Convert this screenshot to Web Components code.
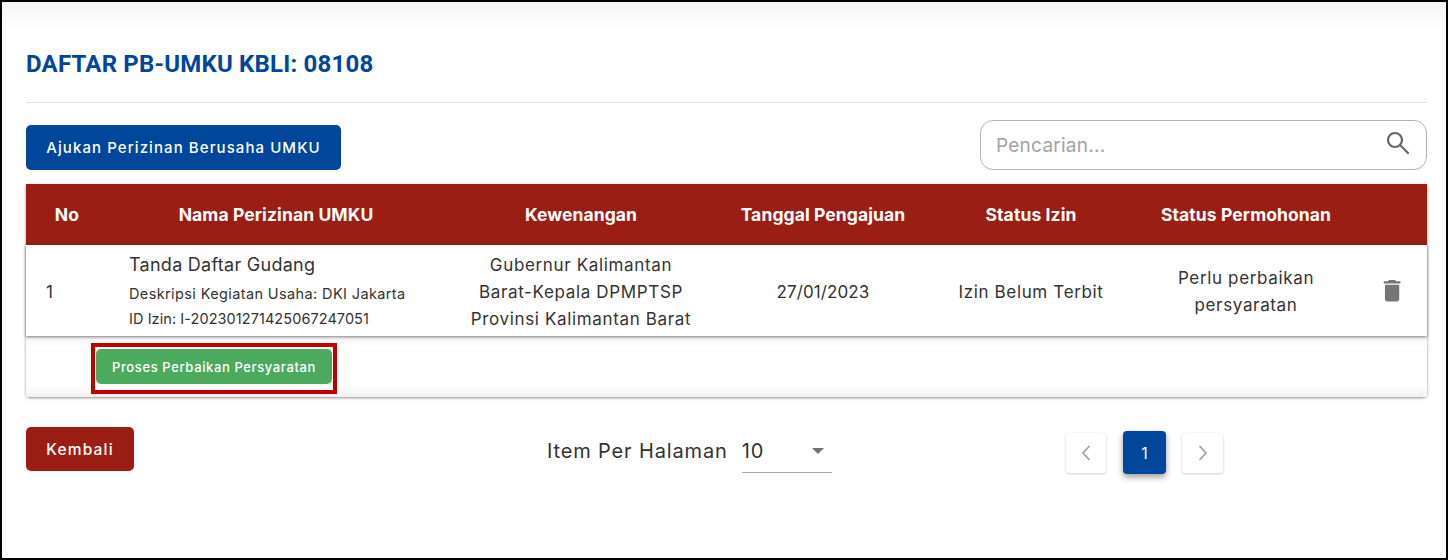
<!DOCTYPE html>
<html lang="id">
<head>
<meta charset="utf-8">
<title>Daftar PB-UMKU</title>
<style>
  html, body { margin: 0; background: #fff; }
  body { font-family: Inter, "Noto Sans", sans-serif; color: #333; }
</style>
</head>
<body>
<umku-page>
  <umku-toolbar slot="toolbar"></umku-toolbar>
  <umku-table slot="table"></umku-table>
  <umku-footer slot="footer"></umku-footer>
</umku-page>

<script>
class UmkuButton extends HTMLElement {
    constructor() {
        super();
        this.attachShadow({ mode: 'open' });
        this.shadowRoot.innerHTML = `
        <style>
          :host { display: inline-flex; }
          button {
            font: 500 var(--fs, 14px) Inter, sans-serif;
            letter-spacing: var(--ls, .6px);
            color: #fff;
            background: var(--bg, #00479b);
            border: 0;
            border-radius: 5px;
            width: var(--w, auto);
            height: var(--h, 45px);
            padding: 0;
            white-space: nowrap;
          }
        </style>
        <button><slot></slot></button>`;
    }
}

class UmkuSearch extends HTMLElement {
    constructor() {
        super();
        this.attachShadow({ mode: 'open' });
        this.shadowRoot.innerHTML = `
        <style>
          :host {
            display: flex;
            align-items: center;
            justify-content: space-between;
            box-sizing: border-box;
            width: 447px;
            height: 50px;
            border: 1px solid #b4b4b4;
            border-radius: 13px;
            padding: 0 16px 0 15px;
            font: 400 19px Inter, sans-serif;
            letter-spacing: .25px;
            color: #a3a3a3;
          }
          svg { display: block; margin-top: -6px; }
        </style>
        <span>Pencarian...</span>
        <svg width="25" height="25" viewBox="0 0 25 25" fill="none" stroke="#666" stroke-width="2.2">
          <circle cx="10" cy="10" r="7"/>
          <path d="M15 15l8 8" stroke-linecap="round"/>
        </svg>`;
    }
}

class UmkuToolbar extends HTMLElement {
    constructor() {
        super();
        this.attachShadow({ mode: 'open' });
        this.shadowRoot.innerHTML = `
        <style>
          :host { display: flex; justify-content: space-between; align-items: flex-end; height: 50px; }
        </style>
        <umku-button style="--w:315px;--fs:15px;--ls:1.08px">Ajukan Perizinan Berusaha UMKU</umku-button>
        <umku-search></umku-search>`;
    }
}

class UmkuTable extends HTMLElement {
    set data(row) {
        this._row = row;
        this.render();
    }

    constructor() {
        super();
        this.attachShadow({ mode: 'open' });
    }

    connectedCallback() {
        if (this._row) this.render();
    }

    render() {
        const headers = ['No', 'Nama Perizinan UMKU', 'Kewenangan', 'Tanggal Pengajuan', 'Status Izin', 'Status Permohonan', ''];
        const row = this._row;
        this.shadowRoot.innerHTML = `
        <style>
          :host {
            display: block;
            border-radius: 0 0 4px 4px;
            box-shadow: 0 1px 3px rgba(0,0,0,.45);
          }
          .grid { display: grid; grid-template-columns: 82px 336px 274px 210px 206px 224px 69px; }
          .head {
            height: 61px;
            background: #9a1e13;
            color: #fff;
            font-weight: 700;
            font-size: 17.5px;
            letter-spacing: .1px;
          }
          .head div { display: flex; align-items: center; justify-content: center; white-space: nowrap; }
          .body {
            height: 91px;
            background: #fff;
            font-size: 17px;
            line-height: 27px;
            color: #333;
            letter-spacing: .65px;
            position: relative;
            z-index: 1;
            box-shadow: 0 1px 3px rgba(0,0,0,.5);
          }
          .body > div { display: flex; align-items: center; justify-content: center; text-align: center; padding-top: 3px; }
          .body .no { justify-content: flex-start; padding-left: 20px; }
          .body .name { display: block; text-align: left; padding: 6px 0 0 21px; white-space: nowrap; }
          .body .date { letter-spacing: .1px; }
          .name b { display: block; font-weight: 400; font-size: 18px; letter-spacing: .27px; }
          .name small { display: block; font-size: 14.5px; letter-spacing: .38px; margin-top: 2px; }
          .name small.id { letter-spacing: .07px; margin-top: -2px; }
          .body svg { margin: -3px 2px 0 0; }
          .sub {
            height: 61px;
            box-sizing: border-box;
            padding: 7px 0 0 65px;
            background: linear-gradient(#f6f6f6, #fff 20%, #fff 80%, #f2f2f2);
          }
          .mark { display: flex; width: fit-content; border: 4px solid #c00000; padding: 2px 1px 6px 1px; background: #fff; }
        </style>
        <div class="grid head">${headers.map(h => `<div>${h}</div>`).join('')}</div>
        <div class="grid body">
          <div class="no">${row.no}</div>
          <div class="name"><b>${row.name}</b><small>${row.desc}</small><small class="id">${row.id}</small></div>
          <div>${row.authority}</div>
          <div class="date">${row.date}</div>
          <div>${row.status}</div>
          <div>${row.request}</div>
          <div>
            <svg width="24" height="24" viewBox="0 0 24 24" fill="#757575"><path d="M6 19c0 1.1.9 2 2 2h8c1.1 0 2-.9 2-2V7H6v12zM19 4h-3.500l-1-1h-5l-1 1H5v2h14V4z" transform="translate(-2.200 -2.600) scale(1.190)"/></svg>
          </div>
        </div>
        <div class="sub">
          <div class="mark"><umku-button style="--w:236px;--h:35px;--bg:#4caa5f;--fs:13px;--ls:.62px">Proses Perbaikan Persyaratan</umku-button></div>
        </div>`;
    }
}

class UmkuPager extends HTMLElement {
    constructor() {
        super();
        this.attachShadow({ mode: 'open' });
        this.shadowRoot.innerHTML = `
        <style>
          :host { display: flex; align-items: center; }
          div {
            box-sizing: border-box;
            display: flex; align-items: center; justify-content: center;
            height: 40px;
            background: #fff;
            border-radius: 4px;
            box-shadow: 0 1px 3px rgba(0,0,0,.2);
            font-size: 16px;
          }
          .arrow { width: 40px; }
          .arrow.next { width: 41px; }
          .cur {
            width: 43px; height: 43px;
            background: #00479b; color: #fff;
            margin: 0 16px 0 17px;
            box-shadow: 0 3px 6px rgba(0,0,0,.4);
          }
        </style>
        <div class="arrow"><svg width="12" height="18" viewBox="0 0 12 18" fill="none" stroke="#a0a0a0" stroke-width="1.700"><path d="M9.500 2L3 9l6.500 7"/></svg></div>
        <div class="cur">1</div>
        <div class="arrow next"><svg width="12" height="18" viewBox="0 0 12 18" fill="none" stroke="#a0a0a0" stroke-width="1.700"><path d="M2.500 2L9 9l-6.500 7"/></svg></div>`;
    }
}

class UmkuFooter extends HTMLElement {
    constructor() {
        super();
        this.attachShadow({ mode: 'open' });
        this.shadowRoot.innerHTML = `
        <style>
          :host { display: grid; grid-template-columns: 521px 519px auto; align-items: start; height: 50px; }
          .size { display: flex; align-items: flex-start; padding-top: 12px; font-size: 20px; letter-spacing: .85px; color: #333; line-height: 25px; }
          .select {
            box-sizing: border-box;
            width: 90px;
            height: 34px;
            margin-left: 14px;
            border-bottom: 1px solid #aaa;
            display: flex;
            justify-content: space-between;
            padding-right: 8px;
          }
          .caret { width: 0; height: 0; border: 6px solid transparent; border-top: 6px solid #757575; border-bottom: 0; margin-top: 9px; }
          umku-pager { margin-top: 4px; }
        </style>
        <div><umku-button style="--w:108px;--h:44px;--bg:#9a1e13;--fs:15.500px;--ls:1.2px">Kembali</umku-button></div>
        <div class="size">
          <span>Item Per Halaman</span>
          <div class="select"><span>10</span><span class="caret"></span></div>
        </div>
        <umku-pager></umku-pager>`;
    }
}

class UmkuPage extends HTMLElement {
    constructor() {
        super();
        this.attachShadow({ mode: 'open' });
        this.shadowRoot.innerHTML = `
        <style>
          :host {
            display: block;
            box-sizing: border-box;
            width: 1448px;
            height: 560px;
            border: 2px solid #000;
            padding: 46px 19px 0 24px;
            overflow: hidden;
            background: linear-gradient(#f4f4f4, #fff 28px);
          }
          h1 {
            margin: 0;
            font: 700 24px/32px Roboto, sans-serif;
            letter-spacing: .2px;
            color: #00479b;
          }
          hr { border: 0; border-top: 1px solid #e2e2e2; margin: 22px 0 17px; }
          .t { margin-top: 14px; }
          .f { margin-top: 30px; }
        </style>
        <h1>DAFTAR PB-UMKU KBLI: 08108</h1>
        <hr>
        <slot name="toolbar"></slot>
        <div class="t"><slot name="table"></slot></div>
        <div class="f"><slot name="footer"></slot></div>`;
    }
}

customElements.define('umku-button', UmkuButton);
customElements.define('umku-search', UmkuSearch);
customElements.define('umku-toolbar', UmkuToolbar);
customElements.define('umku-table', UmkuTable);
customElements.define('umku-pager', UmkuPager);
customElements.define('umku-footer', UmkuFooter);
customElements.define('umku-page', UmkuPage);

document.querySelector('umku-table').data = {
    no: '1',
    name: 'Tanda Daftar Gudang',
    desc: 'Deskripsi Kegiatan Usaha: DKI Jakarta',
    id: 'ID Izin: I-20230127142506724705' + '1',
    authority: 'Gubernur Kalimantan<br>Barat-Kepala DPMPTSP<br>Provinsi Kalimantan Barat',
    date: '27/01/2023',
    status: 'Izin Belum Terbit',
    request: 'Perlu perbaikan<br>persyaratan'
};
</script>
</body>
</html>
